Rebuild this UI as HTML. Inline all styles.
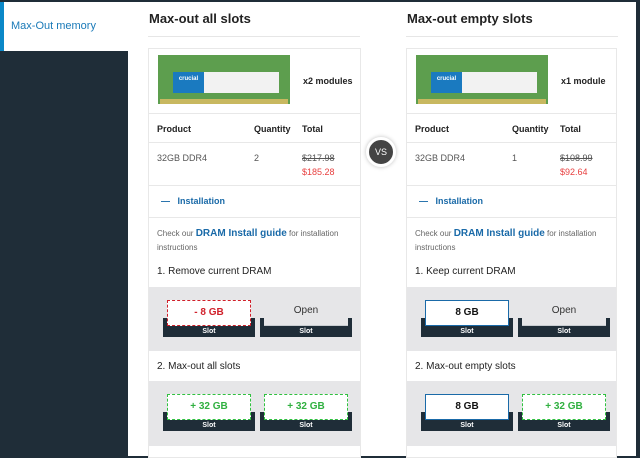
<!DOCTYPE html>
<html><head><style>
*{margin:0;padding:0;box-sizing:border-box}
body{width:640px;height:456px;overflow:hidden;background:#1f2d38;font-family:"Liberation Sans",sans-serif;position:relative;color:#222}
.a{position:absolute}
.main{left:128px;top:2px;width:508px;height:454px;background:#fff}
.side{left:0;top:2px;width:128px;height:49px;background:#fff;border-left:4px solid #0a88c8}
.side span{position:absolute;left:7px;top:18px;font-size:11px;color:#1a7ab8}
.title{font-size:13px;font-weight:bold;color:#222}
.hr{height:1px;background:#e6e6e6}
.card{border:1px solid #e8e8e8;background:#fff}
.row{position:absolute;left:0;right:0;border-bottom:1px solid #e8e8e8}
.t{font-size:9px;position:absolute}
.gray{position:absolute;left:0;right:0;background:#e6e6e8}
.slot{position:absolute;width:92px;height:19px}
.slot .w{position:absolute;left:0;top:0;width:4px;height:19px;background:#1f2d38}
.slot .w2{left:88px}
.slot .b{position:absolute;left:0;top:8px;width:92px;height:11px;background:#1f2d38;color:#fff;font-size:7px;font-weight:bold;text-align:center;line-height:11px}
.slot .ln{position:absolute;left:4px;top:7px;width:84px;height:1px;background:#c8ccd0}
.box{position:absolute;width:84px;height:26px;font-size:10px;font-weight:bold;text-align:center;line-height:24px}
.red{border:1.5px dashed #d0202a;color:#d0202a;background:#fff}
.grn{border:1.5px dashed #30c040;color:#30b040;background:#fff}
.blu{border:1.5px solid #1a6aa8;color:#111;background:#fff}
.open{border:none;background:transparent;color:#333;font-weight:normal}
.ram{position:absolute;left:9px;top:6px;width:132px;height:49px;background:#5d9e4e}
.ram .gold{position:absolute;left:2px;right:2px;bottom:0;height:5px;background:#c8b860}
.ram .bl{position:absolute;left:15px;top:17px;width:31px;height:21px;background:#1a7ac0;color:#fff;font-size:6px;font-weight:bold;text-align:center;line-height:14px}
.ram .wl{position:absolute;left:46px;top:17px;width:75px;height:21px;background:#f2f2f2}
</style></head><body>
<div class="a main"></div>
<div class="a side"><span>Max-Out memory</span></div>

<div class="a title" style="left:149px;top:11px">Max-out all slots</div>
<div class="a hr" style="left:148px;top:36px;width:212px"></div>
<div class="a card" style="left:148px;top:48px;width:213px;height:410px">
 <div class="row" style="top:0;height:65px"><div class="ram"><div class="bl">crucial</div><div class="wl"></div><div class="gold"></div></div><div class="t" style="left:154px;top:27px;font-weight:bold">x2 modules</div></div>
 <div class="row" style="top:65px;height:29px"><div class="t" style="left:8px;top:10px;font-weight:bold">Product</div><div class="t" style="left:105px;top:10px;font-weight:bold">Quantity</div><div class="t" style="left:153px;top:10px;font-weight:bold">Total</div></div>
 <div class="row" style="top:94px;height:43px"><div class="t" style="left:8px;top:10px;color:#555">32GB DDR4</div><div class="t" style="left:105px;top:10px;color:#555">2</div><div class="t" style="left:153px;top:10px;color:#555;text-decoration:line-through">$217.98</div><div class="t" style="left:153px;top:24px;color:#e84040">$185.28</div></div>
 <div class="row" style="top:137px;height:32px"><div class="t" style="left:12px;top:10px;color:#1a6aa8;font-weight:bold">—&nbsp;&nbsp; Installation</div></div>
 <div class="t" style="left:8px;top:178px;color:#666;font-size:8px;line-height:14px;width:200px">Check our <b style="color:#1a6aa8;font-size:10px">DRAM Install guide</b> for installation instructions</div>
 <div class="t" style="left:8px;top:217px;font-size:10px">1. Remove current DRAM</div>
 <div class="gray" style="top:238px;height:64px">
  <div class="slot" style="left:14px;top:31px"><div class="w"></div><div class="w w2"></div><div class="b">Slot</div></div>
  <div class="box red" style="left:18px;top:13px">- 8 GB</div>
  <div class="slot" style="left:111px;top:31px"><div class="w"></div><div class="w w2"></div><div class="ln"></div><div class="b">Slot</div></div>
  <div class="box open" style="left:115px;top:12px">Open</div>
 </div>
 <div class="t" style="left:8px;top:312px;font-size:10px">2. Max-out all slots</div>
 <div class="gray" style="top:332px;height:65px">
  <div class="slot" style="left:14px;top:31px"><div class="w"></div><div class="w w2"></div><div class="b">Slot</div></div>
  <div class="box grn" style="left:18px;top:13px">+ 32 GB</div>
  <div class="slot" style="left:111px;top:31px"><div class="w"></div><div class="w w2"></div><div class="b">Slot</div></div>
  <div class="box grn" style="left:115px;top:13px">+ 32 GB</div>
 </div>
</div>

<div class="a title" style="left:407px;top:11px">Max-out empty slots</div>
<div class="a hr" style="left:406px;top:36px;width:212px"></div>
<div class="a card" style="left:406px;top:48px;width:211px;height:410px">
 <div class="row" style="top:0;height:65px"><div class="ram"><div class="bl">crucial</div><div class="wl"></div><div class="gold"></div></div><div class="t" style="left:154px;top:27px;font-weight:bold">x1 module</div></div>
 <div class="row" style="top:65px;height:29px"><div class="t" style="left:8px;top:10px;font-weight:bold">Product</div><div class="t" style="left:105px;top:10px;font-weight:bold">Quantity</div><div class="t" style="left:153px;top:10px;font-weight:bold">Total</div></div>
 <div class="row" style="top:94px;height:43px"><div class="t" style="left:8px;top:10px;color:#555">32GB DDR4</div><div class="t" style="left:105px;top:10px;color:#555">1</div><div class="t" style="left:153px;top:10px;color:#555;text-decoration:line-through">$108.99</div><div class="t" style="left:153px;top:24px;color:#e84040">$92.64</div></div>
 <div class="row" style="top:137px;height:32px"><div class="t" style="left:12px;top:10px;color:#1a6aa8;font-weight:bold">—&nbsp;&nbsp; Installation</div></div>
 <div class="t" style="left:8px;top:178px;color:#666;font-size:8px;line-height:14px;width:200px">Check our <b style="color:#1a6aa8;font-size:10px">DRAM Install guide</b> for installation instructions</div>
 <div class="t" style="left:8px;top:217px;font-size:10px">1. Keep current DRAM</div>
 <div class="gray" style="top:238px;height:64px">
  <div class="slot" style="left:14px;top:31px"><div class="w"></div><div class="w w2"></div><div class="b">Slot</div></div>
  <div class="box blu" style="left:18px;top:13px">8 GB</div>
  <div class="slot" style="left:111px;top:31px"><div class="w"></div><div class="w w2"></div><div class="ln"></div><div class="b">Slot</div></div>
  <div class="box open" style="left:115px;top:12px">Open</div>
 </div>
 <div class="t" style="left:8px;top:312px;font-size:10px">2. Max-out empty slots</div>
 <div class="gray" style="top:332px;height:65px">
  <div class="slot" style="left:14px;top:31px"><div class="w"></div><div class="w w2"></div><div class="b">Slot</div></div>
  <div class="box blu" style="left:18px;top:13px">8 GB</div>
  <div class="slot" style="left:111px;top:31px"><div class="w"></div><div class="w w2"></div><div class="b">Slot</div></div>
  <div class="box grn" style="left:115px;top:13px">+ 32 GB</div>
 </div>
</div>

<div class="a" style="left:366px;top:137px;width:30px;height:30px;border-radius:50%;background:#444;border:3px solid #fff;box-shadow:0 0 4px rgba(0,0,0,.25);color:#fff;font-size:9px;text-align:center;line-height:24px">VS</div>
</body></html>
